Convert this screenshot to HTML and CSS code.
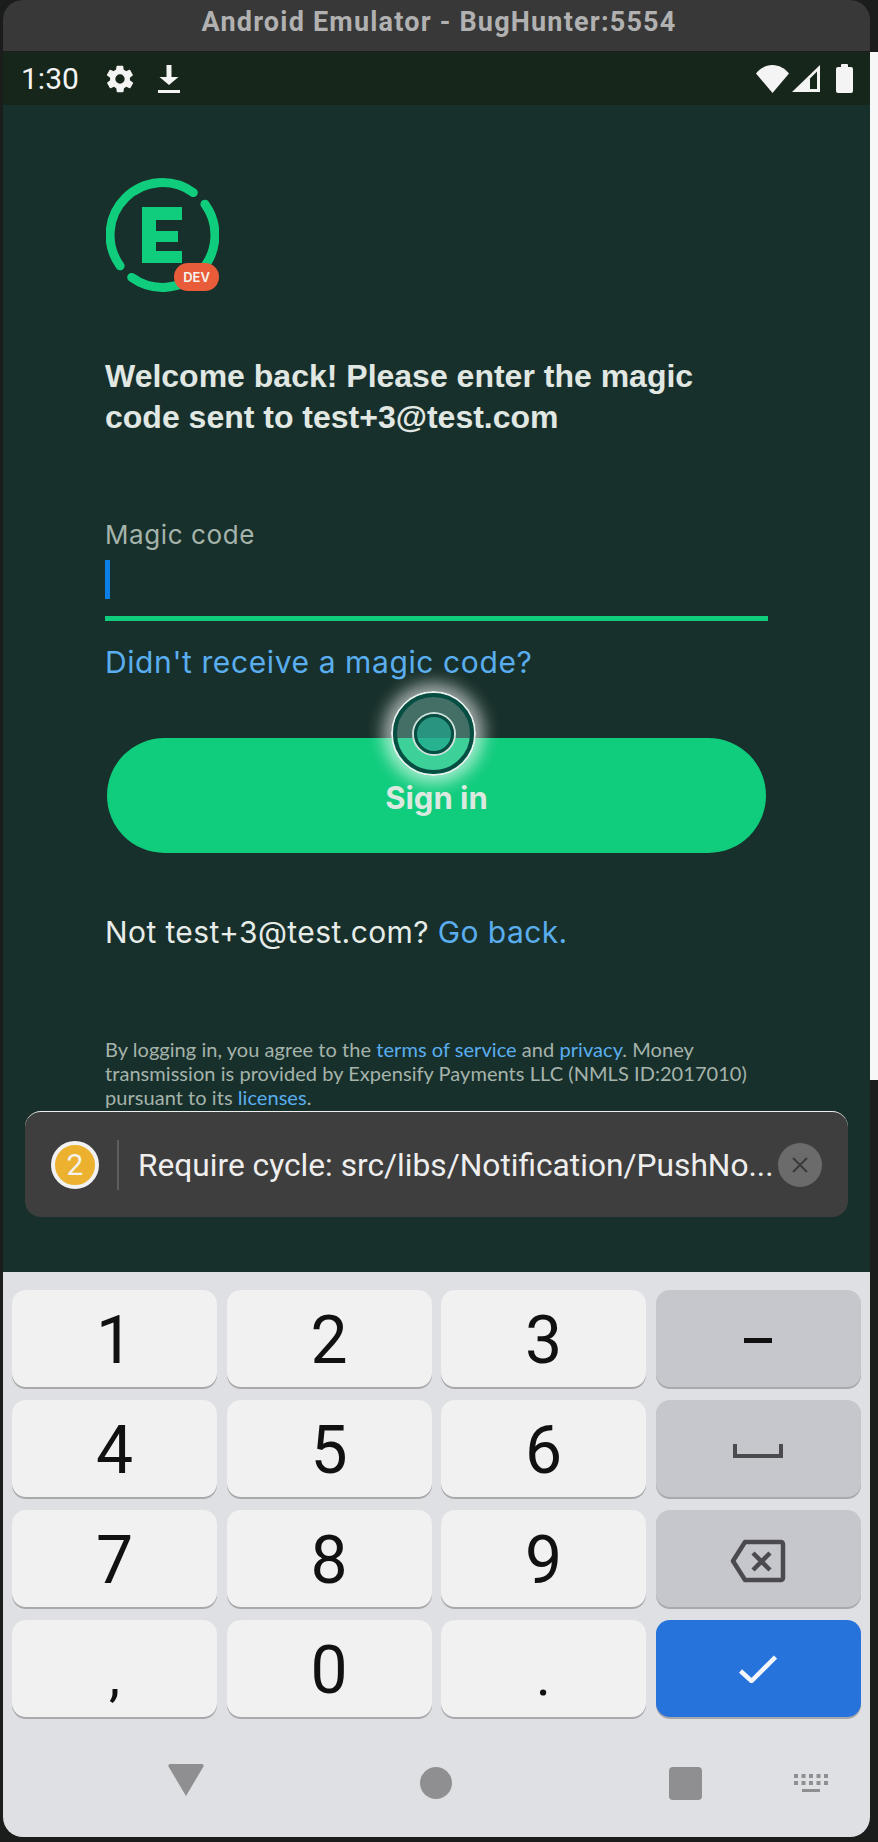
FILE: index.html
```html
<!DOCTYPE html>
<html lang="en">
<head>
<meta charset="utf-8">
<title>Android Emulator - BugHunter:5554</title>
<link rel="stylesheet" href="styles.css">
</head>
<body>
<div class="desktop">
  <main class="window">
    <header class="titlebar">Android Emulator - BugHunter:5554</header>
    <div class="statusbar">
      <span class="time">1:30</span>
      <svg class="ic-gear" viewBox="0 0 24 24"><path fill="#f4f4f4" d="M19.4 13a7.500 7.500 0 0 0 0-2l2.100-1.600a.5.5 0 0 0 .1-.6l-2-3.500a.5.5 0 0 0-.6-.2l-2.500 1a7.300 7.300 0 0 0-1.700-1l-.4-2.600a.5.5 0 0 0-.5-.5h-4a.5.5 0 0 0-.5.4l-.4 2.700a7.700 7.700 0 0 0-1.700 1l-2.500-1a.5.5 0 0 0-.6.2l-2 3.500a.5.5 0 0 0 .1.6L4.600 11a7.800 7.800 0 0 0 0 2l-2.100 1.600a.5.5 0 0 0-.1.6l2 3.500c.1.2.4.3.6.2l2.500-1c.5.4 1.100.8 1.700 1l.4 2.600c0 .3.2.5.5.5h4c.3 0 .5-.2.5-.4l.4-2.700a7.700 7.700 0 0 0 1.700-1l2.500 1c.2.1.5 0 .6-.2l2-3.500a.5.5 0 0 0-.1-.6zM12 15.500a3.500 3.500 0 1 1 0-7 3.500 3.500 0 0 1 0 7z"/></svg>
      <svg class="ic-down" viewBox="0 0 22 28"><path fill="#f4f4f4" d="M8.500 0h5v12h7L11 20 1.500 12h7zM0 25h22v3H0z"/></svg>
      <span class="status-spacer"></span>
      <svg class="ic-wifi" viewBox="0 0 33 28"><path fill="#f4f4f4" d="M16.500 28 0 8.500C4 3.500 10 0 16.500 0S29 3.500 33 8.500z"/></svg>
      <svg class="ic-signal" viewBox="0 0 28 27"><path fill="#f4f4f4" d="M28 0v27H0z"/><path fill="#17261a" d="M25 6.500V24h-7V13.500z"/></svg>
      <svg class="ic-batt" viewBox="0 0 17 29"><path fill="#f4f4f4" d="M5 1a1 1 0 0 1 1-1h5a1 1 0 0 1 1 1v2h3a2 2 0 0 1 2 2v22a2 2 0 0 1-2 2H2a2 2 0 0 1-2-2V5a2 2 0 0 1 2-2h3z"/></svg>
    </div>
    <section class="app">
      <div class="logo">
        <svg viewBox="0 0 113 114" class="logo-mark">
          <path class="ring" d="M87.300 14.600A52.400 52.400 0 0 0 14.100 87.800"/>
          <path class="ring" d="M25.700 99.400A52.400 52.400 0 0 0 98.900 26.200"/>
          <path class="e" d="M36 29H76V42H50V53H72V64H50V73H76V85H36Z"/>
        </svg>
        <span class="dev">DEV</span>
      </div>
      <h1 class="welcome">Welcome back! Please enter the magic code sent to test+3@test.com</h1>
      <div class="label">Magic code</div>
      <div class="field"><span class="caret"></span></div>
      <a class="link resend">Didn't receive a magic code?</a>
      <button class="signin">Sign in</button>
      <p class="notyou">Not test+3@test.com? <a class="link">Go back.</a></p>
      <p class="legal">By logging in, you agree to the <a class="link">terms of service</a> and <a class="link">privacy</a>. Money transmission is provided by Expensify Payments LLC (NMLS ID:2017010) pursuant to its <a class="link">licenses</a>.</p>
      <div class="touch"><span class="touch-inner"></span></div>
      <div class="toast">
        <span class="count">2</span>
        <span class="toast-div"></span>
        <span class="toast-text">Require cycle: src/libs/Notification/PushNo...</span>
        <span class="toast-close"><svg viewBox="0 0 20 20"><path d="M3 3l14 14M17 3 3 17"/></svg></span>
      </div>
    </section>
    <section class="keyboard">
      <div class="keys">
        <div class="key">1</div><div class="key">2</div><div class="key">3</div>
        <div class="key alt"><span class="minus"></span></div>
        <div class="key">4</div><div class="key">5</div><div class="key">6</div>
        <div class="key alt"><svg class="ic-space" viewBox="0 0 50 14"><path d="M2 0v12h46V0"/></svg></div>
        <div class="key">7</div><div class="key">8</div><div class="key">9</div>
        <div class="key alt"><svg class="ic-back" viewBox="0 0 56 44"><path d="M15 3h36a2 2 0 0 1 2 2v34a2 2 0 0 1-2 2H15L3 22zM23 14l17 17M40 14 23 31"/></svg></div>
        <div class="key punct">,</div><div class="key">0</div><div class="key punct">.</div>
        <div class="key go"><svg class="ic-check" viewBox="0 0 38 28"><path d="M1.500 16l11 10L36.500 2"/></svg></div>
      </div>
      <nav class="navbar">
        <svg class="nav-back" viewBox="0 0 36 32"><path d="M2 0h32a2 2 0 0 1 1.500 2.500L18 32 .5 2.500A2 2 0 0 1 2 0z"/></svg>
        <span class="nav-home"></span>
        <span class="nav-recent"></span>
        <svg class="nav-kb" viewBox="0 0 34 18"><path d="M0 0h4v4H0zM7.500 0h4v4h-4zM15 0h4v4h-4zM22.500 0h4v4h-4zM30 0h4v4h-4zM0 7h4v4H0zM7.500 7h4v4h-4zM15 7h4v4h-4zM22.500 7h4v4h-4zM30 7h4v4h-4zM8 15h18v3H8z"/></svg>
      </nav>
    </section>
  </main>
  <aside class="rail"><span class="rail-white"></span></aside>
</div>
</body>
</html>
```
FILE: styles.css
```css
* { box-sizing: border-box; }
html, body { margin: 0; padding: 0; background: #1b1d1c; }
.desktop { display: flex; width: 878px; height: 1842px; overflow: hidden; padding-left: 3px; }
.window { width: 867px; height: 1837px; display: flex; flex-direction: column; border-radius: 20px; overflow: hidden; flex: none; }
.titlebar { height: 52px; flex: none; background: #383838; color: #b1b1b1; font: 700 27px/45px Roboto, sans-serif; text-align: center; letter-spacing: 1.2px; padding-left: 5px; border-bottom: 1px solid #1d1d1d; }
.statusbar { height: 53px; flex: none; background: #17261a; display: flex; align-items: center; padding: 0 17px 0 18px; color: #f4f4f4; }
.time { font: 400 30px Roboto, sans-serif; width: 83px; flex: none; }
.ic-gear { width: 32px; height: 32px; flex: none; }
.ic-down { width: 22px; height: 28px; margin-left: 22px; flex: none; }
.status-spacer { flex: 1; }
.ic-wifi { width: 33px; height: 28px; flex: none; }
.ic-signal { width: 28px; height: 27px; margin-left: 3px; flex: none; }
.ic-batt { width: 17px; height: 29px; margin-left: 16px; flex: none; }
.app { flex: 1; background: #18302b; position: relative; padding: 73px 102px 0; display: flex; flex-direction: column; align-items: flex-start; font-family: Inter, sans-serif; }
.logo { position: relative; width: 113px; height: 114px; margin-left: 1px; flex: none; }
.logo-mark { display: block; width: 113px; height: 114px; }
.ring { fill: none; stroke: #10cc7d; stroke-width: 9; stroke-linecap: round; }
.e { fill: #10cc7d; }
.dev { position: absolute; right: 0; bottom: 1px; width: 45px; height: 28px; border-radius: 14px; background: #e85c3a; color: #f5f5f0; font: 600 13px/28px Inter, sans-serif; text-align: center; }
.welcome { margin: 64px 0 0; width: 640px; color: #e1e8e3; font: 700 32px/41px "Liberation Sans", sans-serif; }
.label { margin-top: 80px; color: #a5b3ab; font-size: 26px; line-height: 34px; letter-spacing: .6px; }
.field { width: 663px; height: 69px; border-bottom: 5px solid #10cc7d; padding-top: 8px; flex: none; }
.caret { display: block; width: 5px; height: 39px; background: #0b7ee8; }
.link { color: #5aaeef; }
.resend { margin-top: 22px; font-size: 30px; line-height: 38px; letter-spacing: .6px; }
.signin { margin: 57px 0 0 2px; width: 659px; height: 115px; border: 0; border-radius: 58px; background: #10cc7d; color: #dbe8df; font: 700 31px/1 Inter, sans-serif; padding: 3px 0 0; flex: none; }
.notyou { margin: 60px 0 0; color: #e7ece9; font-size: 30px; line-height: 38px; letter-spacing: .4px; }
.legal { margin: 86px 0 0; width: 670px; color: #a5b3ab; font-family: Lato, sans-serif; font-size: 20px; line-height: 24px; letter-spacing: .05px; }
.touch { position: absolute; left: 388px; top: 586px; width: 85px; height: 85px; border-radius: 50%; border: 2px solid #e9f2ee; background: rgba(140, 215, 200, .38); outline: 4px solid #064d42; outline-offset: -6px; box-shadow: 0 0 16px 8px rgba(255, 255, 255, .6); display: flex; align-items: center; justify-content: center; }
.touch-inner { width: 40px; height: 40px; border-radius: 50%; background: rgba(30, 165, 140, .7); border: 3px solid #064d42; box-shadow: 0 0 0 2px #cfe0da; }
.toast { position: absolute; left: 22px; top: 1006px; width: 823px; height: 106px; background: #3e3e3e; border-radius: 16px; border-top: 1px solid #eee; display: flex; align-items: center; padding: 0 26px; color: #eee; }
.count { width: 48px; height: 48px; flex: none; border-radius: 50%; border: 4px solid #f2f2f2; background: #ebb12f; color: #f2f2f2; font: 400 30px/40px Roboto, sans-serif; text-align: center; }
.toast-div { width: 2px; height: 50px; background: #5e5e5e; margin: 0 19px 0 18px; flex: none; }
.toast-text { flex: 1; min-width: 0; white-space: nowrap; font: 400 31.700px/44px Roboto, sans-serif; padding-top: 2px; }
.toast-close { width: 44px; height: 44px; flex: none; border-radius: 50%; background: #6b6b6b; display: flex; align-items: center; justify-content: center; }
.toast-close svg { width: 20px; height: 20px; fill: none; stroke: #3a3a3a; stroke-width: 2; }
.keyboard { height: 565px; flex: none; background: #dfe0e3; padding: 18px 10px 0 9px; display: flex; flex-direction: column; }
.keys { display: grid; grid-template-columns: repeat(4, 205px); grid-auto-rows: 97px; gap: 13px 9.500px; flex: none; }
.key { background: #f1f1f2; border-radius: 14px; box-shadow: 0 2px 0 #a9a9ac; display: flex; align-items: center; justify-content: center; color: #111; font: 400 66px/1 Roboto, sans-serif; padding-top: 4px; }
.alt { background: #c6c7cd; }
.go { background: #2673dc; padding-top: 0; }
.punct { font-size: 56px; padding-top: 15px; }
.minus { display: block; width: 28px; height: 5px; background: #111; }
.ic-space { width: 50px; height: 14px; fill: none; stroke: #4b4b4f; stroke-width: 4; }
.ic-back { width: 56px; height: 44px; fill: none; stroke: #4b4b4f; stroke-width: 4.500; stroke-linejoin: round; }
.ic-check { width: 38px; height: 28px; fill: none; stroke: #f4f6fb; stroke-width: 4.500; }
.navbar { flex: 1; display: flex; align-items: flex-start; padding-top: 47px; }
.nav-back { width: 36px; height: 32px; margin-left: 156px; fill: #8f8f91; flex: none; }
.nav-home { width: 32px; height: 32px; margin: 3px 0 0 216px; border-radius: 50%; background: #8f8f91; flex: none; }
.nav-recent { width: 33px; height: 33px; margin: 3px 0 0 217px; border-radius: 4px; background: #8f8f91; flex: none; }
.nav-kb { width: 34px; height: 18px; margin: 10px 0 0 92px; fill: #8f8f91; flex: none; }
.rail { flex: none; width: 8px; padding-top: 52px; }
.rail-white { display: block; height: 1028px; background: #f7f7f7; }
```
